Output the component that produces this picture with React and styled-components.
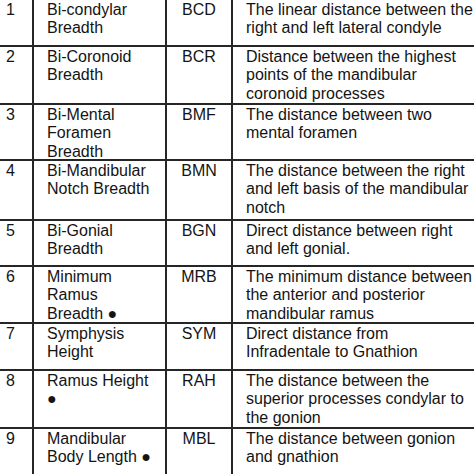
import React from "react";
import styled, { createGlobalStyle } from "styled-components";

const GlobalStyle = createGlobalStyle`
  html, body {
    margin: 0;
    padding: 0;
    background: #ffffff;
    overflow: hidden;
  }
`;

const LINE = "#262626";

const rows = [
  { no: "1", name: "Bi-condylar Breadth", code: "BCD", desc: "The linear distance between the right and left lateral condyle", h: 47 },
  { no: "2", name: "Bi-Coronoid Breadth", code: "BCR", desc: "Distance between the highest points of the mandibular coronoid processes", h: 58 },
  { no: "3", name: "Bi-Mental Foramen Breadth", code: "BMF", desc: "The distance between two mental foramen", h: 56 },
  { no: "4", name: "Bi-Mandibular Notch Breadth", code: "BMN", desc: "The distance between the right and left basis of the mandibular notch", h: 60 },
  { no: "5", name: "Bi-Gonial Breadth", code: "BGN", desc: "Direct distance between right and left gonial.", h: 46 },
  { no: "6", name: "Minimum Ramus Breadth \u25CF", code: "MRB", desc: "The minimum distance between the anterior and posterior mandibular ramus", h: 57 },
  { no: "7", name: "Symphysis Height", code: "SYM", desc: "Direct distance from Infradentale to Gnathion", h: 47 },
  { no: "8", name: "Ramus Height \u25CF", code: "RAH", desc: "The distance between the superior processes condylar to the gonion", h: 58 },
  { no: "9", name: "Mandibular Body Length \u25CF", code: "MBL", desc: "The distance between gonion and gnathion", h: 60 },
];

const Page = styled.div`
  width: 474px;
  height: 474px;
  overflow: hidden;
  background: #fff;
`;

const Table = styled.div`
  width: 483px;
  margin-top: -2px;
  border-top: 2px solid ${LINE};
  font-family: "Liberation Sans", Arial, sans-serif;
  font-size: 16px;
  line-height: 18.3px;
  color: #141414;
`;

const Row = styled.div`
  display: grid;
  grid-template-columns: 34px 133px 66px 1fr;
  height: ${(p) => p.$h}px;
  box-sizing: border-box;
  border-bottom: 2px solid ${LINE};
`;

const Cell = styled.div`
  box-sizing: border-box;
  padding-top: 1px;
  border-right: 2px solid ${LINE};
`;

const NoCell = styled(Cell)`
  padding-left: 6px;
`;

const NameCell = styled(Cell)`
  padding-left: 13px;
  padding-right: 8px;
`;

const CodeCell = styled(Cell)`
  text-align: center;
`;

const DescCell = styled(Cell)`
  padding-left: 13px;
  padding-right: 8px;
  border-right: none;
`;

export default function App() {
  return (
    <Page>
      <GlobalStyle />
      <Table>
        {rows.map((r) => (
          <Row key={r.no} $h={r.h}>
            <NoCell>{r.no}</NoCell>
            <NameCell>{r.name}</NameCell>
            <CodeCell>{r.code}</CodeCell>
            <DescCell>{r.desc}</DescCell>
          </Row>
        ))}
      </Table>
    </Page>
  );
}
